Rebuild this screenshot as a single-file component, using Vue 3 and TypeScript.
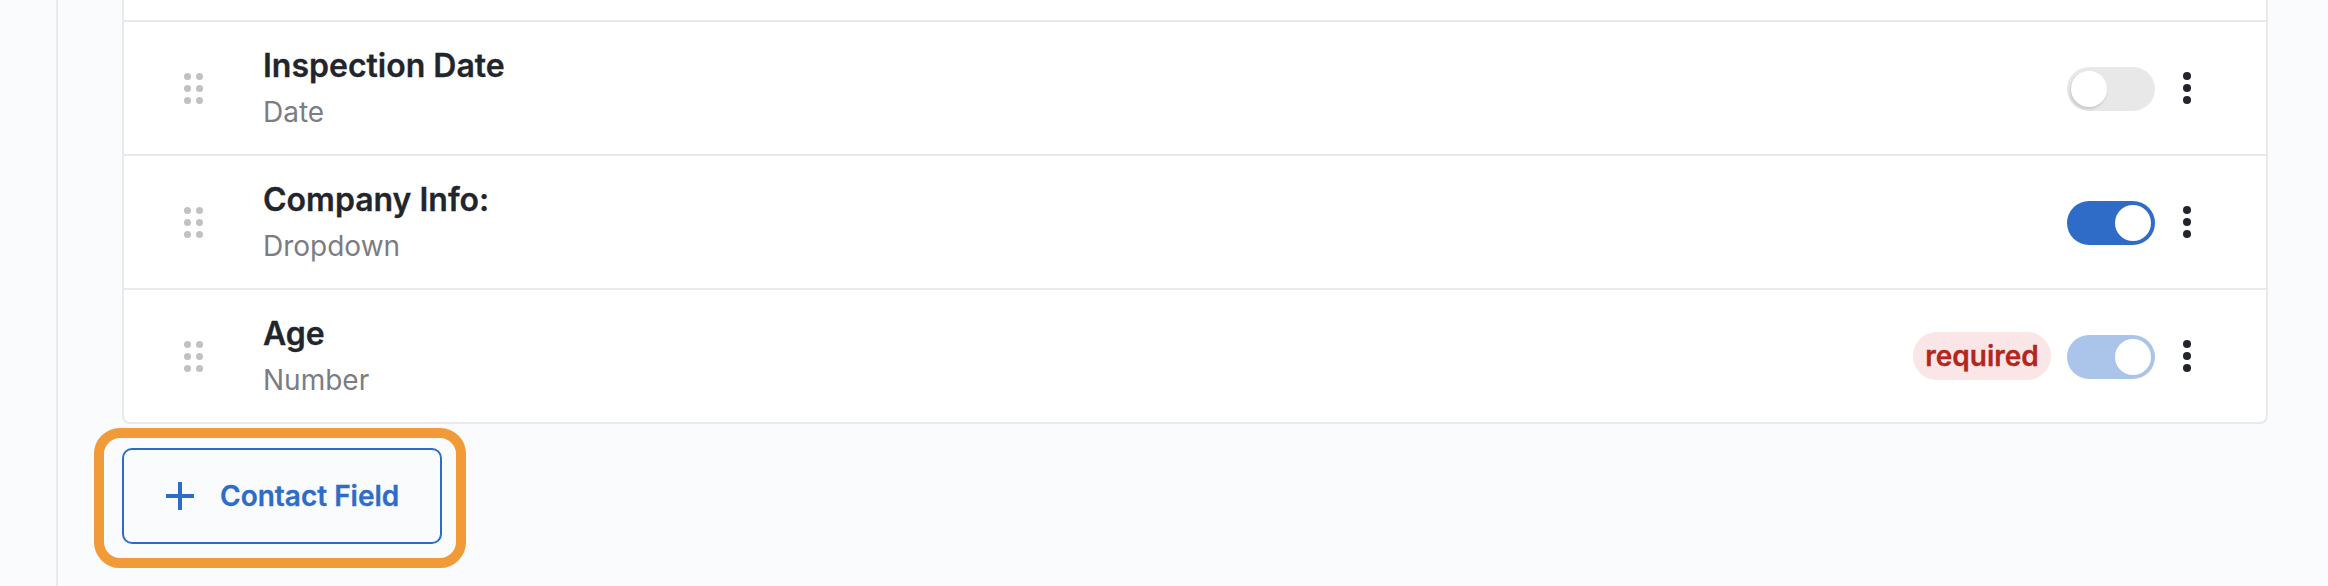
<script setup lang="ts">
interface Field {
  name: string
  type: string
  state: 'off' | 'on' | 'locked'
  required?: boolean
}

const fields: Field[] = [
  { name: 'Inspection Date', type: 'Date', state: 'off' },
  { name: 'Company Info:', type: 'Dropdown', state: 'on' },
  { name: 'Age', type: 'Number', state: 'locked', required: true },
]
const dragDots = [
  [3.5, 3.5], [15.5, 3.5],
  [3.5, 15.5], [15.5, 15.5],
  [3.5, 27.5], [15.5, 27.5],
]
</script>

<template>
  <div class="page">
    <div class="content">
      <div class="card">
        <div class="row-stub"></div>
        <div v-for="field in fields" :key="field.name" class="row">
          <svg class="drag" width="19" height="31" viewBox="0 0 19 31" aria-hidden="true">
            <circle v-for="(d, i) in dragDots" :key="i" :cx="d[0]" :cy="d[1]" r="3.5" />
          </svg>
          <div class="labels">
            <div class="name">{{ field.name }}</div>
            <div class="type">{{ field.type }}</div>
          </div>
          <span v-if="field.required" class="badge">required</span>
          <span class="toggle" :class="field.state"><span class="knob"></span></span>
          <svg class="kebab" width="8" height="32" viewBox="0 0 8 32" aria-hidden="true">
            <circle cx="4" cy="4" r="4" />
            <circle cx="4" cy="16" r="4" />
            <circle cx="4" cy="28" r="4" />
          </svg>
        </div>
      </div>
      <div class="action">
        <button class="add" type="button">
          <svg width="28" height="28" viewBox="0 0 28 28" aria-hidden="true">
            <path d="M14 0v28M0 14h28" />
          </svg>
          <span>Contact Field</span>
        </button>
        <div class="highlight"></div>
      </div>
    </div>
  </div>
</template>

<style>
html, body { margin: 0; background: #fafbfd; }
</style>

<style scoped>
.page {
  width: 2328px;
  height: 586px;
  overflow: hidden;
  background: #fafbfd;
  font-family: Inter, "Liberation Sans", sans-serif;
}
.content {
  box-sizing: border-box;
  height: 586px;
  margin-left: 56px;
  padding-left: 64px;
  border-left: 2px solid #e9eaec;
}
.card {
  box-sizing: border-box;
  width: 2146px;
  background: #fff;
  border: 2px solid #e9e9eb;
  border-top: 0;
  border-radius: 0 0 8px 8px;
}
.row-stub {
  height: 20px;
  border-bottom: 2px solid #e9e9eb;
}
.row {
  box-sizing: border-box;
  display: flex;
  align-items: center;
  height: 134px;
  padding: 0 75px 0 60px;
  border-bottom: 2px solid #e9e9eb;
}
.row:last-child { border-bottom: 0; height: 132px; }
.drag { flex: none; fill: #c1c1c3; }
.labels {
  flex: 1;
  margin-left: 60px;
  display: flex;
  flex-direction: column;
}
.name {
  margin-top: -1px;
  font-size: 32px;
  line-height: 44px;
  font-weight: 600;
  color: #22252c;
  -webkit-text-stroke: 0.3px #22252c;
}
.type {
  margin-top: 4px;
  font-size: 28px;
  line-height: 40px;
  color: #7b7d82;
}
.badge {
  box-sizing: border-box;
  height: 48px;
  width: 138px;
  margin-right: 16px;
  border-radius: 24px;
  background: #fae6e6;
  color: #b3261e;
  font-size: 28px;
  font-weight: 600;
  line-height: 48px;
  text-align: center;
  -webkit-text-stroke: 0.3px #b3261e;
}
.toggle {
  box-sizing: border-box;
  flex: none;
  display: flex;
  width: 88px;
  height: 44px;
  margin-top: 2px;
  margin-right: 28px;
  padding: 4px;
  border-radius: 22px;
}
.toggle.off { background: #e8e8e8; }
.toggle.on { background: #2f6cc8; justify-content: flex-end; }
.toggle.locked { background: #abc5ea; justify-content: flex-end; }
.knob {
  width: 36px;
  height: 36px;
  border-radius: 50%;
  background: #fff;
}
.toggle.off .knob { box-shadow: -1px 2px 3px rgba(0, 0, 0, 0.15); }
.kebab { flex: none; fill: #22252c; }
.action {
  position: relative;
  width: 320px;
  margin-top: 24px;
}
.add {
  box-sizing: border-box;
  display: flex;
  align-items: center;
  width: 320px;
  height: 96px;
  padding: 0 0 0 42px;
  background: transparent;
  border: 2px solid #2e6cc7;
  border-radius: 10px;
  color: #2e6cc7;
  font-family: inherit;
  font-size: 28px;
  font-weight: 600;
  -webkit-text-stroke: 0.3px #2e6cc7;
}
.add svg { flex: none; margin-right: 26px; }
.add path { fill: none; stroke: currentColor; stroke-width: 4; }
.highlight {
  position: absolute;
  box-sizing: border-box;
  left: -28px;
  top: -20px;
  width: 372px;
  height: 140px;
  border: 10px solid #f19a38;
  border-radius: 26px;
  pointer-events: none;
}
</style>
